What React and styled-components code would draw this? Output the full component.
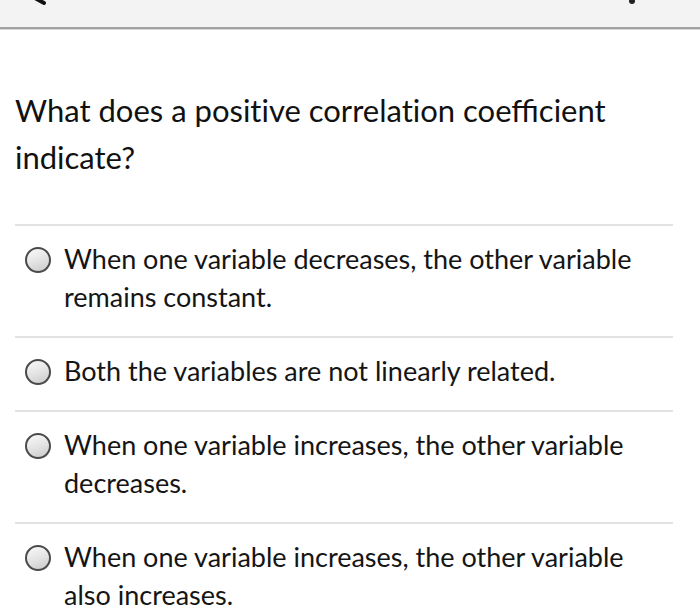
import styled, { createGlobalStyle } from 'styled-components';

const GlobalStyle = createGlobalStyle`
    html, body {
        margin: 0;
        padding: 0;
        background: #ffffff;
        font-family: Lato, "Open Sans", sans-serif;
        color: #151515;
    }
`;

// zero-width non-joiner keeps Lato from drawing its "ti" ligature
const question = 'What does a posit\u200Cive correlat\u200Cion coefficient indicate?';

const options = [
    'When one variable decreases, the other variable remains constant.',
    'Both the variables are not linearly related.',
    'When one variable increases, the other variable decreases.',
    'When one variable increases, the other variable also increases.',
];

const App = () => {
    return (
        <PageRoot>
            <GlobalStyle />
            <TopBar>
                <BarIcons width="700" height="27" viewBox="0 0 700 27">
                    <path d="M 24 -8 L 44 3" stroke="#111" strokeWidth="4" strokeLinecap="round" fill="none" />
                    <circle cx="632" cy="1" r="3" fill="#222" />
                </BarIcons>
            </TopBar>
            <Content>
                <Question>{question}</Question>
                <OptionList>
                    {options.map((text) => (
                        <OptionRow key={text}>
                            <Radio />
                            <OptionText>{text}</OptionText>
                        </OptionRow>
                    ))}
                </OptionList>
            </Content>
        </PageRoot>
    );
};

export default App;

const PageRoot = styled.div`
    width: 700px;
    min-height: 613px;
    overflow: hidden;
`;

const TopBar = styled.header`
    height: 27px;
    background: #f3f3f3;
    border-bottom: 2px solid #a2a2a2;
    box-shadow: 0 1px 0 #d6d6d6;
`;

const BarIcons = styled.svg`
    display: block;
`;

const Content = styled.main`
    padding: 58px 27px 0 15px;
`;

const Question = styled.h1`
    margin: 0 0 43px;
    font-size: 31px;
    line-height: 47px;
    font-weight: 400;
    color: #111;
`;

const OptionList = styled.div`
    display: flex;
    flex-direction: column;
`;

const OptionRow = styled.label`
    display: flex;
    align-items: flex-start;
    gap: 13px;
    padding: 14px 0 20px 10px;
    border-top: 2px solid #e2e2e2;
`;

const Radio = styled.span`
    flex: none;
    width: 22px;
    height: 22px;
    margin-top: 7px;
    border-radius: 50%;
    border: 2px solid #4a4a4a;
    background: linear-gradient(160deg, #fafafa 0%, #e2e2e2 55%, #c9c9c9 100%);
`;

const OptionText = styled.span`
    font-size: 27px;
    line-height: 38px;
    color: #151515;
`;
